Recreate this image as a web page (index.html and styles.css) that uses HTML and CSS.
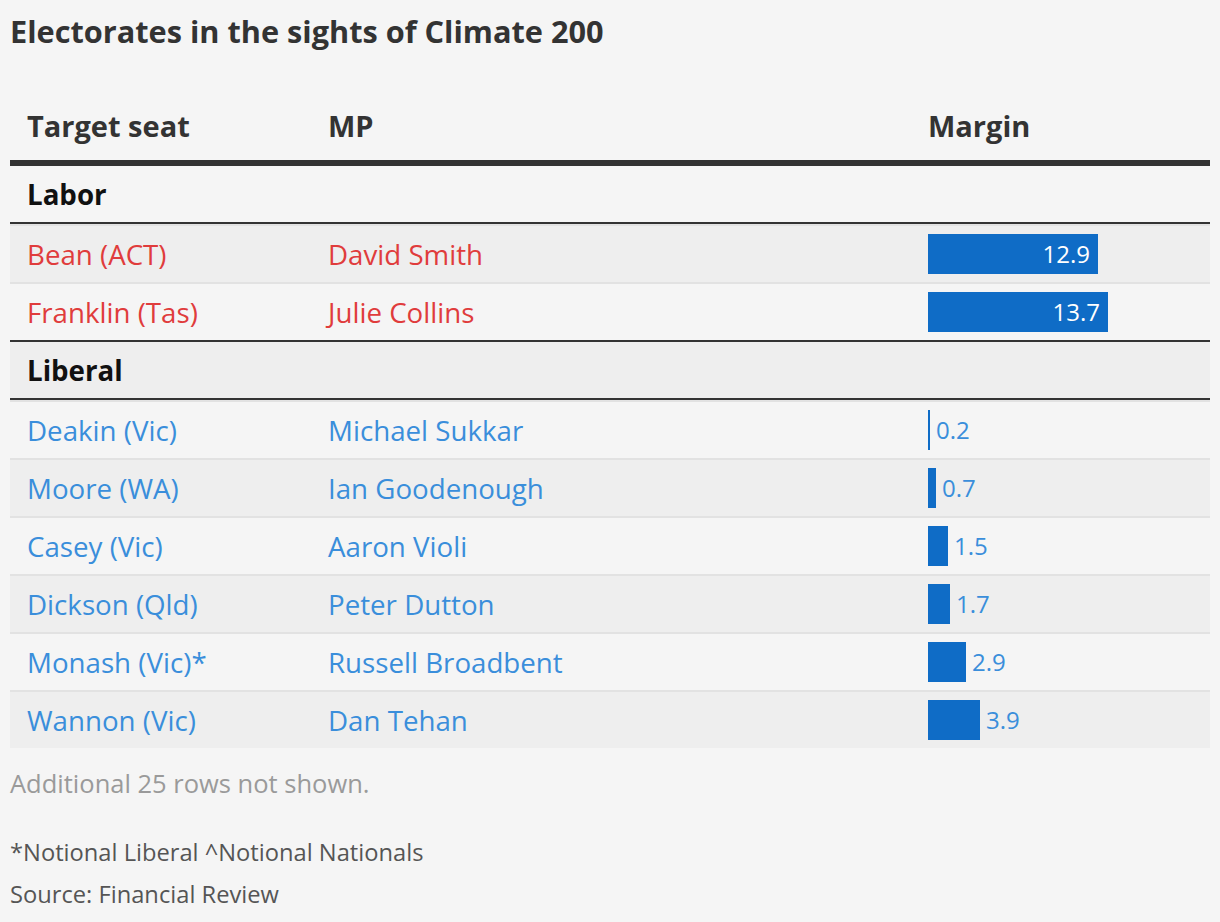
FILE: index.html
```html
<!DOCTYPE html>
<html lang="en">
<head>
<meta charset="utf-8">
<title>Electorates in the sights of Climate 200</title>
<link rel="stylesheet" href="styles.css">
</head>
<body>
<div class="page">
  <h1 class="title">Electorates in the sights of Climate 200</h1>
  <table class="seats">
    <colgroup>
      <col class="col-seat">
      <col class="col-mp">
      <col class="col-margin">
    </colgroup>
    <thead>
      <tr>
        <th>Target seat</th>
        <th>MP</th>
        <th>Margin</th>
      </tr>
    </thead>
    <tbody>
      <tr class="section first">
        <td colspan="3">Labor</td>
      </tr>
      <tr class="row labor">
        <td>Bean (ACT)</td>
        <td>David Smith</td>
        <td><div class="bar-cell"><div class="bar inside" style="width:170px">12.9</div></div></td>
      </tr>
      <tr class="row labor">
        <td>Franklin (Tas)</td>
        <td>Julie Collins</td>
        <td><div class="bar-cell"><div class="bar inside" style="width:180px">13.7</div></div></td>
      </tr>
      <tr class="section">
        <td colspan="3">Liberal</td>
      </tr>
      <tr class="row liberal">
        <td>Deakin (Vic)</td>
        <td>Michael Sukkar</td>
        <td><div class="bar-cell"><div class="bar" style="width:2px"></div><span class="bar-label">0.2</span></div></td>
      </tr>
      <tr class="row liberal">
        <td>Moore (WA)</td>
        <td>Ian Goodenough</td>
        <td><div class="bar-cell"><div class="bar" style="width:8px"></div><span class="bar-label">0.7</span></div></td>
      </tr>
      <tr class="row liberal">
        <td>Casey (Vic)</td>
        <td>Aaron Violi</td>
        <td><div class="bar-cell"><div class="bar" style="width:20px"></div><span class="bar-label">1.5</span></div></td>
      </tr>
      <tr class="row liberal">
        <td>Dickson (Qld)</td>
        <td>Peter Dutton</td>
        <td><div class="bar-cell"><div class="bar" style="width:22px"></div><span class="bar-label">1.7</span></div></td>
      </tr>
      <tr class="row liberal">
        <td>Monash (Vic)*</td>
        <td>Russell Broadbent</td>
        <td><div class="bar-cell"><div class="bar" style="width:38px"></div><span class="bar-label">2.9</span></div></td>
      </tr>
      <tr class="row liberal">
        <td>Wannon (Vic)</td>
        <td>Dan Tehan</td>
        <td><div class="bar-cell"><div class="bar" style="width:52px"></div><span class="bar-label">3.9</span></div></td>
      </tr>
    </tbody>
  </table>
  <p class="more">Additional 25 rows not shown.</p>
  <p class="note">*Notional Liberal ^Notional Nationals</p>
  <p class="note">Source: Financial Review</p>
</div>
</body>
</html>
```

FILE: styles.css
```css
html, body {
  margin: 0;
  padding: 0;
  background: #f5f5f5;
}

body {
  font-family: "Open Sans", "Noto Sans", sans-serif;
  color: #333;
}

.page {
  padding: 0 10px;
}

.title {
  margin: 0;
  padding-top: 12px;
  font-size: 30.7px;
  line-height: 38px;
  font-weight: 700;
  color: #333;
}

.seats {
  width: 1200px;
  margin-top: 56px;
  border-collapse: separate;
  border-spacing: 0;
  table-layout: fixed;
}

.col-seat { width: 301px; }
.col-mp { width: 600px; }
.col-margin { width: 299px; }

.seats th {
  text-align: left;
  font-size: 29px;
  font-weight: 700;
  color: #333;
  padding: 0 17px 14px;
  line-height: 40px;
  vertical-align: bottom;
  border-bottom: 6px solid #333;
}

.seats td {
  height: 56px;
  padding: 0 17px;
  font-size: 27.7px;
  line-height: 36px;
  vertical-align: middle;
  white-space: nowrap;
}

.seats tbody tr:nth-child(even) td {
  background: #eeeeee;
}

.section td {
  font-weight: 700;
  color: #111;
  border-top: 2px solid #333;
  border-bottom: 2px solid #333;
}

.section.first td {
  border-top: none;
}

.row td {
  border-top: 2px solid #e2e2e2;
}

.row.labor td {
  color: #e03c3c;
}

.row.liberal td {
  color: #3a8edb;
}

.bar-cell {
  display: flex;
  align-items: center;
  gap: 6px;
}

.bar {
  height: 40px;
  background: #0f6cc6;
  flex: none;
}

.bar.inside {
  box-sizing: border-box;
  padding-right: 8px;
  text-align: right;
  color: #fff;
  font-size: 24px;
  line-height: 40px;
}

.bar-label {
  font-size: 24px;
  line-height: 40px;
  color: #3a8edb;
}

.more {
  margin: 18px 0 0;
  font-size: 25.5px;
  line-height: 34px;
  color: #9a9a9a;
}

.more + .note {
  margin-top: 34px;
}

.note {
  margin: 6px 0 0;
  font-size: 23.7px;
  line-height: 36px;
  color: #555;
}
```
